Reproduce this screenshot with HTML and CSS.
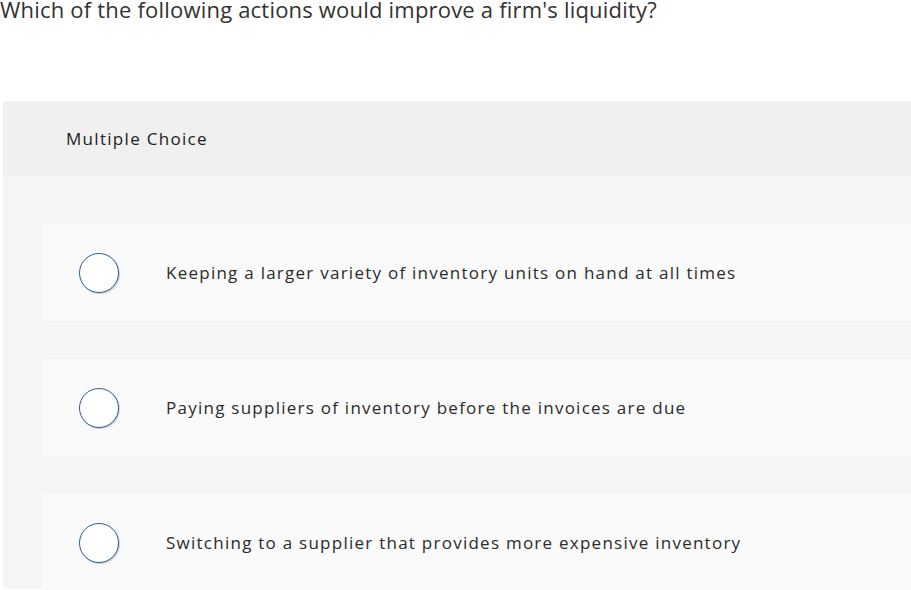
FILE: index.html
```html
<!DOCTYPE html>
<html lang="en">
<head>
<meta charset="utf-8">
<title>Multiple Choice</title>
<link rel="stylesheet" href="styles.css">
</head>
<body>
<h1 class="question">Which of the following actions would improve a firm's liquidity?</h1>
<section class="panel">
  <div class="panel-header">Multiple Choice</div>
  <div class="panel-body">
    <label class="option"><span class="radio"></span><span class="option-text">Keeping a larger variety of inventory units on hand at all times</span></label>
    <label class="option"><span class="radio"></span><span class="option-text">Paying suppliers of inventory before the invoices are due</span></label>
    <label class="option"><span class="radio"></span><span class="option-text">Switching to a supplier that provides more expensive inventory</span></label>
  </div>
</section>
</body>
</html>
```
FILE: styles.css
```css
html, body {
  margin: 0;
  padding: 0;
  background: #ffffff;
  overflow: hidden;
}
body {
  font-family: "Open Sans", sans-serif;
  color: #333333;
  width: 911px;
  height: 590px;
}
.question {
  margin: -3px 0 0 0;
  font-size: 22px;
  line-height: 24px;
  font-weight: 400;
  letter-spacing: 0.2px;
  color: #333333;
}
.panel {
  margin: 80px 0 0 3px;
  height: 488px;
  background: #f5f5f5;
  border-top-left-radius: 3px;
}
.panel-header {
  height: 75px;
  background: #f0f0f0;
  display: flex;
  align-items: center;
  padding-left: 63px;
  font-size: 17px;
  letter-spacing: 1.3px;
  color: #222222;
  border-top-left-radius: 3px;
}
.panel-body {
  padding: 48px 0 0 39px;
  display: flex;
  flex-direction: column;
  gap: 38px;
}
.option {
  height: 97px;
  background: #fafafa;
  border-radius: 4px 0 0 4px;
  display: flex;
  align-items: center;
  padding-left: 37px;
  gap: 47px;
}
.radio {
  width: 38px;
  height: 38px;
  border: 1.5px solid #2c5f97;
  border-radius: 50%;
  background: #ffffff;
  box-shadow: 1px 1px 1px rgba(0,0,0,0.18);
  flex: none;
}
.option-text {
  font-size: 17px;
  letter-spacing: 1.25px;
  color: #2b2b2b;
}
```
